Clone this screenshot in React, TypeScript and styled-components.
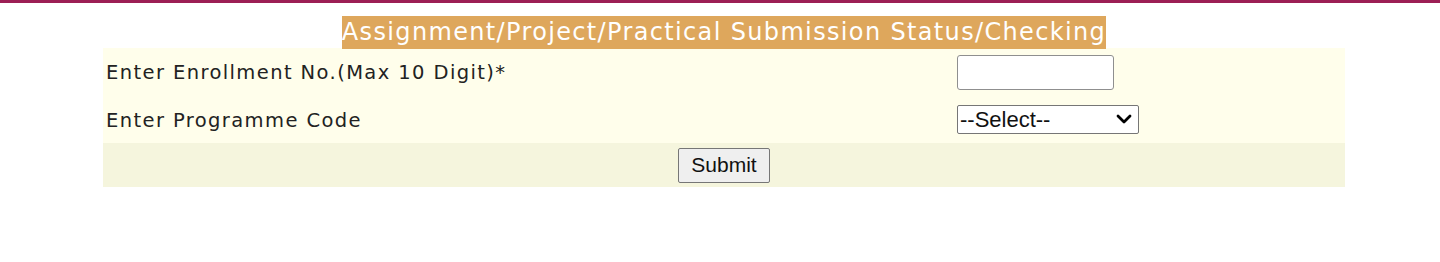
import React from 'react';
import styled, { createGlobalStyle } from 'styled-components';
import { ChevronDown } from 'lucide-react';

const GlobalStyle = createGlobalStyle`
  html, body {
    margin: 0;
    padding: 0;
    background: #ffffff;
  }
`;

const Page = styled.div`
  border-top: 3px solid #9c1f55;
  padding: 13px 95px 0 103px;
  font-family: 'DejaVu Sans', Verdana, sans-serif;
`;

const TitleRow = styled.div`
  text-align: center;
  line-height: 32px;
  height: 32px;
`;

const Title = styled.span`
  background: #dea75c;
  color: #ffffff;
  font-size: 24px;
  letter-spacing: 1.35px;
  padding: 2px 0 3px;
`;

const FormTable = styled.div`
  display: grid;
  grid-template-columns: 852px 1fr;
  background: #fffeeb;
`;

const Label = styled.div<{ $h: number }>`
  display: flex;
  align-items: center;
  padding: 1px 0 0 3px;
  height: ${(p) => p.$h}px;
  box-sizing: border-box;
  font-size: 19.5px;
  letter-spacing: 1.4px;
  color: #222222;
`;

const Field = styled.div<{ $h: number }>`
  display: flex;
  align-items: center;
  padding-left: 2px;
  height: ${(p) => p.$h}px;
`;

const TextInput = styled.input`
  box-sizing: border-box;
  width: 157px;
  height: 35px;
  border: 1px solid #8f8f8f;
  border-radius: 3px;
  background: #ffffff;
`;

const SelectWrap = styled.div`
  position: relative;
  width: 182px;
  height: 29px;
`;

const Select = styled.select`
  box-sizing: border-box;
  appearance: none;
  width: 182px;
  height: 29px;
  padding: 0 0 0 2px;
  font-family: 'Liberation Sans', Arial, sans-serif;
  font-size: 22px;
  color: #111111;
  border: 1px solid #767676;
  border-radius: 2px;
  background: #ffffff;
`;

const Chevron = styled(ChevronDown)`
  position: absolute;
  right: 3px;
  top: 2px;
  pointer-events: none;
  color: #000000;
`;

const SubmitRow = styled.div`
  grid-column: 1 / -1;
  display: flex;
  justify-content: center;
  align-items: center;
  height: 44px;
  background: #f5f5dd;
`;

const SubmitButton = styled.button`
  font-family: 'Liberation Sans', Arial, sans-serif;
  font-size: 21px;
  color: #111111;
  height: 35px;
  width: 92px;
  padding: 0;
  border: 1px solid #767676;
  border-radius: 2px;
  background: #efefef;
`;

export default function App() {
  return (
    <>
      <GlobalStyle />
      <Page>
        <TitleRow>
          <Title>Assignment/Project/Practical Submission Status/Checking</Title>
        </TitleRow>
        <FormTable>
          <Label $h={48}>Enter Enrollment No.(Max 10 Digit)*</Label>
          <Field $h={48}>
            <TextInput type="text" />
          </Field>
          <Label $h={47}>Enter Programme Code</Label>
          <Field $h={47}>
            <SelectWrap>
              <Select defaultValue="">
                <option value="">--Select--</option>
              </Select>
              <Chevron size={24} strokeWidth={2.8} />
            </SelectWrap>
          </Field>
          <SubmitRow>
            <SubmitButton type="button">Submit</SubmitButton>
          </SubmitRow>
        </FormTable>
      </Page>
    </>
  );
}
